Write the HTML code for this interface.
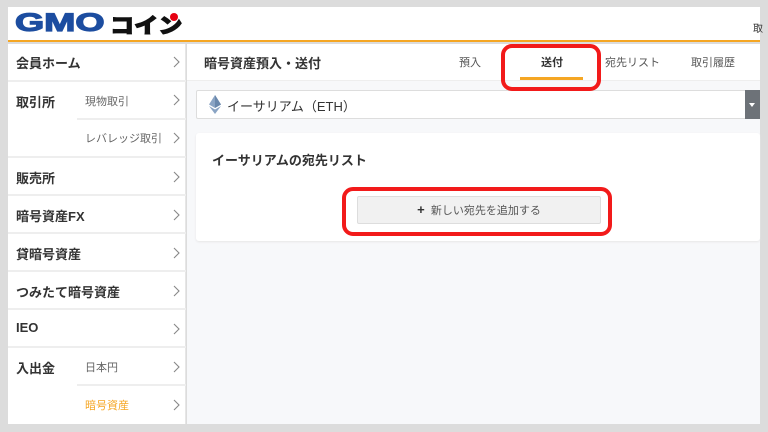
<!DOCTYPE html>
<html><head><meta charset="utf-8"><style>
*{margin:0;padding:0;box-sizing:border-box}
body{width:768px;height:432px;background:#dcdcdc;position:relative;overflow:hidden;font-family:"Liberation Sans","Noto Sans CJK JP",sans-serif;color:#333}
.abs{position:absolute}
.hdr{left:8px;top:7px;width:752px;height:35px;background:#fff;border-bottom:2px solid #f5a623}
.side{left:8px;top:44px;width:178px;height:380px;background:#fff;border-right:1px solid #e6e6e6}
.main{left:187px;top:44px;width:573px;height:380px;background:#f7f8fa}
.t{position:absolute;font-size:13px;font-weight:bold;color:#333;white-space:nowrap}
.s{position:absolute;font-size:11px;color:#666;white-space:nowrap}
.chev{position:absolute;left:165px;width:7px;height:12px}
.hl{position:absolute;height:2px;background:#eee}
.red{position:absolute;border:4px solid #f21a1a;border-radius:11px}
</style></head><body>
<svg width="0" height="0" style="position:absolute"><defs><symbol id="cv" viewBox="0 0 7 12"><path d="M1 1L6 6 1 11" fill="none" stroke="#888" stroke-width="1.1"/></symbol></defs></svg>
<div class="abs hdr">
 <div class="abs" style="left:7px;top:2px;font-size:25px;font-weight:bold;color:#1c4da0;transform:scaleX(1.5);transform-origin:left;-webkit-text-stroke:1.2px #1c4da0;font-family:'Liberation Sans',sans-serif">GMO</div>
 <div class="abs" style="left:102px;top:3px;font-size:21px;font-weight:900;color:#111;transform:scaleX(1.15);transform-origin:left;-webkit-text-stroke:1px #111">コイン</div>
 <div class="abs" style="left:162px;top:6px;width:8px;height:8px;border-radius:50%;background:#e60012"></div>
 <div class="abs" style="left:745px;top:13px;font-size:10px;color:#333">取</div>
</div>
<div class="abs side">
 <div class="t" style="left:8px;top:9px">会員ホーム</div><svg class="chev" style="top:12px"><use href="#cv"/></svg>
 <div class="hl" style="left:0;top:36px;width:178px"></div>
 <div class="t" style="left:8px;top:48px">取引所</div>
 <div class="s" style="left:77px;top:49px">現物取引</div><svg class="chev" style="top:50px"><use href="#cv"/></svg>
 <div class="hl" style="left:69px;top:74px;width:109px"></div>
 <div class="s" style="left:77px;top:86px">レバレッジ取引</div><svg class="chev" style="top:88px"><use href="#cv"/></svg>
 <div class="hl" style="left:0;top:112px;width:178px"></div>
 <div class="t" style="left:8px;top:124px">販売所</div><svg class="chev" style="top:127px"><use href="#cv"/></svg>
 <div class="hl" style="left:0;top:150px;width:178px"></div>
 <div class="t" style="left:8px;top:162px">暗号資産FX</div><svg class="chev" style="top:165px"><use href="#cv"/></svg>
 <div class="hl" style="left:0;top:188px;width:178px"></div>
 <div class="t" style="left:8px;top:200px">貸暗号資産</div><svg class="chev" style="top:203px"><use href="#cv"/></svg>
 <div class="hl" style="left:0;top:226px;width:178px"></div>
 <div class="t" style="left:8px;top:238px">つみたて暗号資産</div><svg class="chev" style="top:241px"><use href="#cv"/></svg>
 <div class="hl" style="left:0;top:264px;width:178px"></div>
 <div class="t" style="left:8px;top:276px">IEO</div><svg class="chev" style="top:279px"><use href="#cv"/></svg>
 <div class="hl" style="left:0;top:302px;width:178px"></div>
 <div class="t" style="left:8px;top:314px">入出金</div>
 <div class="s" style="left:77px;top:315px">日本円</div><svg class="chev" style="top:317px"><use href="#cv"/></svg>
 <div class="hl" style="left:69px;top:340px;width:109px"></div>
 <div class="s" style="left:77px;top:353px;color:#f5a623">暗号資産</div><svg class="chev" style="top:355px"><use href="#cv"/></svg>
</div>
<div class="abs main">
 <div class="abs" style="left:0;top:0;width:573px;height:37px;background:#fff;border-bottom:1px solid #eee"></div>
 <div class="t" style="left:17px;top:9px">暗号資産預入・送付</div>
 <div class="s" style="left:272px;top:10px;color:#555">預入</div>
 <div class="s" style="left:354px;top:10px;color:#333;font-weight:bold">送付</div>
 <div class="abs" style="left:333px;top:33px;width:63px;height:3px;background:#f5a623"></div>
 <div class="s" style="left:418px;top:10px;color:#555">宛先リスト</div>
 <div class="s" style="left:504px;top:10px;color:#555">取引履歴</div>
 <div class="abs" style="left:9px;top:46px;width:564px;height:29px;background:#fff;border:1px solid #ddd;border-radius:2px"></div>
 <svg class="abs" style="left:22px;top:51px" width="12" height="19" viewBox="0 0 12 19"><path d="M6 0L0 9.5 6 13 12 9.5z" fill="#8aa4c4"/><path d="M6 0L6 13 12 9.5z" fill="#6a88ac"/><path d="M0 11L6 19 12 11 6 14.5z" fill="#8aa4c4"/></svg>
 <div class="abs" style="left:40px;top:52px;font-size:13px;color:#333">イーサリアム（ETH）</div>
 <div class="abs" style="left:558px;top:46px;width:15px;height:29px;background:#6d7278"></div>
 <div class="abs" style="left:562px;top:59px;border-left:3.5px solid transparent;border-right:3.5px solid transparent;border-top:4px solid #fff"></div>
 <div class="abs" style="left:9px;top:89px;width:564px;height:108px;background:#fff;border-radius:3px;box-shadow:0 1px 2px #e6e6e6"></div>
 <div class="t" style="left:25px;top:106px">イーサリアムの宛先リスト</div>
 <div class="abs" style="left:170px;top:152px;width:244px;height:28px;background:#f1f1f1;border:1px solid #ddd;border-radius:2px;text-align:center;line-height:26px;font-size:11px;color:#555"><b style="font-size:13px;color:#333">+</b>&nbsp; 新しい宛先を追加する</div>
</div>
<div class="red" style="left:501px;top:44px;width:100px;height:47px"></div>
<div class="red" style="left:342px;top:187px;width:270px;height:49px"></div>
</body></html>
